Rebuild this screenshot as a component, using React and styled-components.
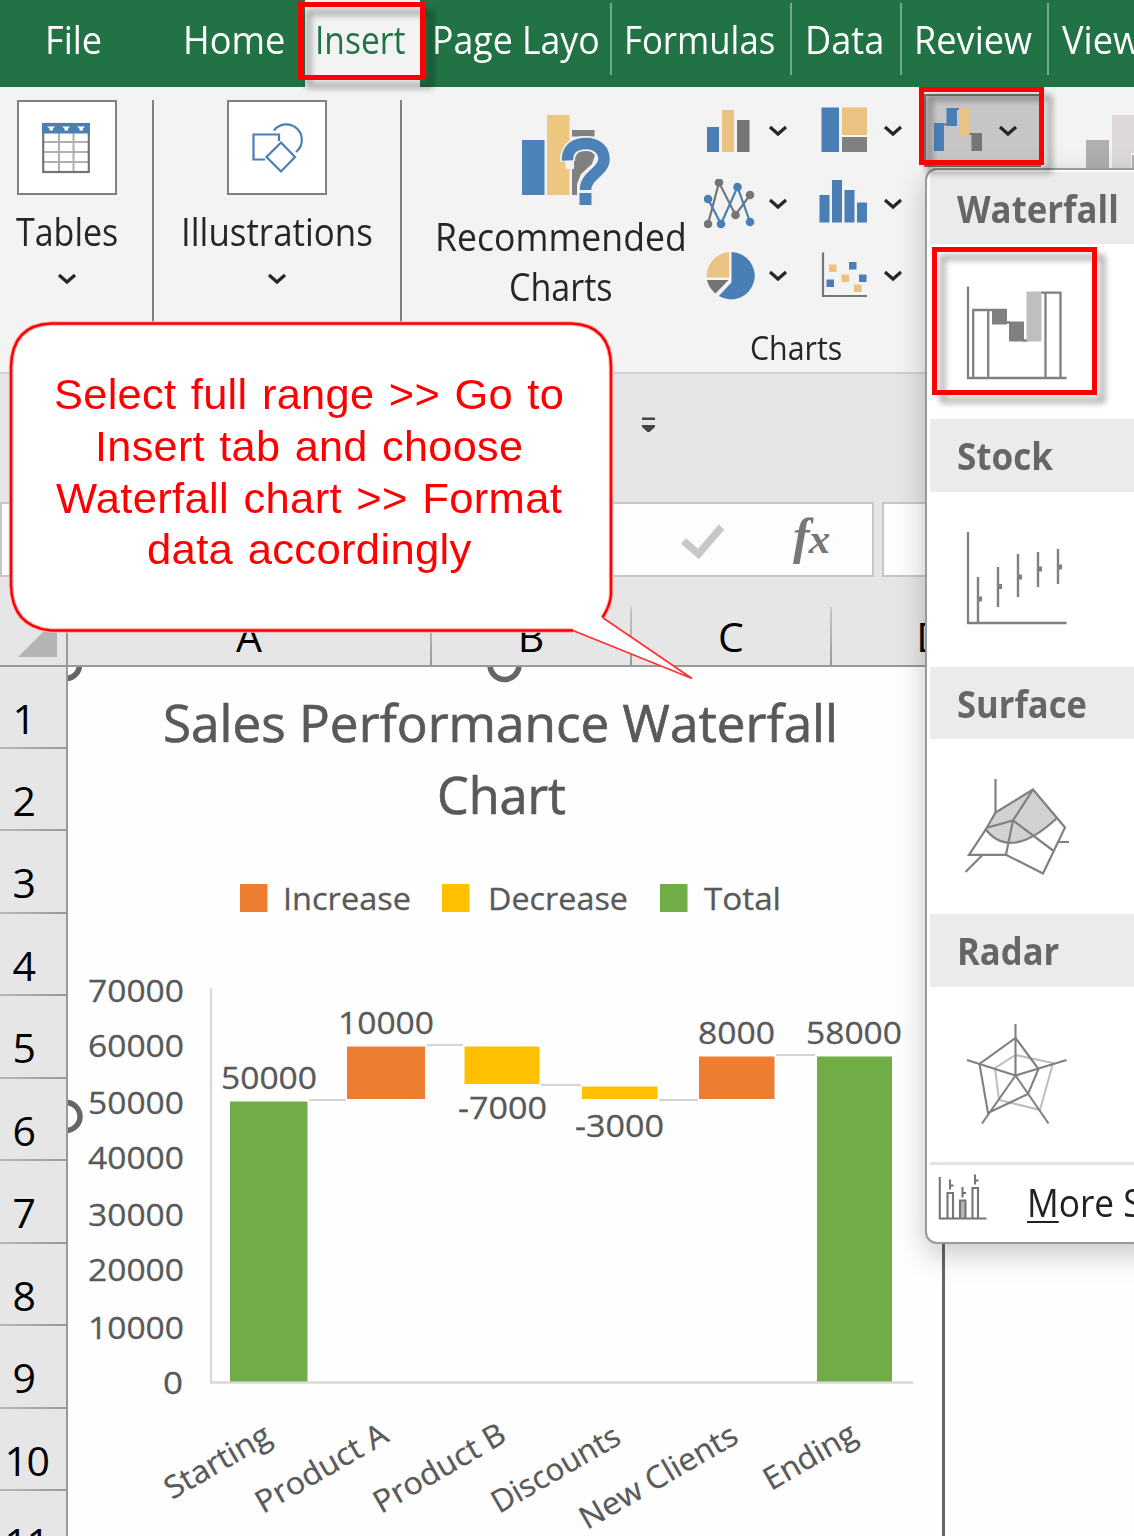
import React, { useLayoutEffect, useRef, useState } from "react";
import styled, { createGlobalStyle } from "styled-components";

const BLUE = "#4a7fb5";
const TAN = "#eac282";
const GRAY = "#757575";
const LINE = "#808080";

const TABS = [
  { name: "File", width: 163, pad: 45, text: 57 },
  { name: "Home", width: 142, pad: 20, text: 102 },
  { name: "Insert", width: 115, pad: 10, text: 90, active: true },
  { name: "Page Layo", width: 192, pad: 12, text: 168, divider: true },
  { name: "Formulas", width: 180, pad: 12, text: 151, divider: true },
  { name: "Data", width: 110, pad: 13, text: 79, divider: true },
  { name: "Review", width: 147, pad: 12, text: 118, divider: true },
  { name: "View", width: 90, pad: 13, text: 79 },
];

const COLUMNS = [
  { name: "A", width: 364 },
  { name: "B", width: 200 },
  { name: "C", width: 200 },
  { name: "D", width: 200 },
];

const ROWS = [1, 2, 3, 4, 5, 6, 7, 8, 9, 10, 11];

const NOTE = [
  ["Select full range >> Go to", 510],
  ["Insert tab and choose", 428],
  ["Waterfall chart >> Format", 506],
  ["data accordingly", 325],
];

const LEGEND = [
  { name: "Increase", color: "#ed7d31", x: 240, tx: 283, w: 128 },
  { name: "Decrease", color: "#ffc000", x: 442, tx: 488, w: 140 },
  { name: "Total", color: "#70ad47", x: 660, tx: 704, w: 77 },
];

const AXIS = [
  ["70000", 1001.5],
  ["60000", 1056.5],
  ["50000", 1114],
  ["40000", 1169],
  ["30000", 1226],
  ["20000", 1281],
  ["10000", 1338.5],
  ["0", 1393.5],
];

const BARS = [
  { x: 230, y: 1101.5, w: 77.5, h: 280, color: "#70ad47", label: "50000", lx: 221, ly: 1089, lw: 96 },
  { x: 347, y: 1046.5, w: 78, h: 52.5, color: "#ed7d31", label: "10000", lx: 338, ly: 1034, lw: 96 },
  { x: 464.5, y: 1046.5, w: 75, h: 37.5, color: "#ffc000", label: "-7000", lx: 458, ly: 1119, lw: 89 },
  { x: 582, y: 1086.5, w: 75.5, h: 12.5, color: "#ffc000", label: "-3000", lx: 575, ly: 1136.5, lw: 89 },
  { x: 699, y: 1056.5, w: 75.5, h: 42.5, color: "#ed7d31", label: "8000", lx: 698, ly: 1044, lw: 77 },
  { x: 817, y: 1056.5, w: 75, h: 325, color: "#70ad47", label: "58000", lx: 806, ly: 1044, lw: 96 },
];

const CONNECTORS = [
  [309, 346, 1100],
  [427, 463, 1045],
  [541, 581, 1085],
  [659, 698, 1100],
  [776, 815, 1055],
];

const CATEGORIES = [
  ["Starting", 172, 1500, 117],
  ["Product A", 263, 1514, 147],
  ["Product B", 381, 1514, 147],
  ["Discounts", 499, 1514, 143],
  ["New Clients", 587, 1530, 177],
  ["Ending", 771, 1491, 102],
];

// squeezes or stretches a label to the given width
function FitText({ width, children }) {
  const ref = useRef(null);
  const [scale, setScale] = useState(1);

  useLayoutEffect(() => {
    setScale(width / ref.current.offsetWidth);
  }, [width]);

  return (
    <St.Fit style={{ width }}>
      <St.FitInner ref={ref} style={{ transform: `scaleX(${scale})` }}>
        {children}
      </St.FitInner>
    </St.Fit>
  );
}

function Icon({ box, children }) {
  const [, , w, h] = box;
  return (
    <svg width={w} height={h} viewBox={box.join(" ")} fill="none">
      {children}
    </svg>
  );
}

function Chevron() {
  return (
    <Icon box={[0, 0, 20, 12]}>
      <path d="M2 2 L10 9 L18 2" stroke="#262626" strokeWidth="3.2" />
    </Icon>
  );
}

function TableIcon() {
  return (
    <Icon box={[42, 121, 50, 52]}>
      <path
        d="M59 132V171M73.5 132V171M43 141H89M43 151H89M43 161H89"
        stroke="#b0b0b0"
        strokeWidth="2"
      />
      <rect x="43.2" y="123" width="45.6" height="48" stroke={GRAY} strokeWidth="2.2" />
      <rect x="42" y="122" width="48" height="10.5" fill={BLUE} />
      <path
        d="M47 125.5H55L53 127.5V129.5H49.5V127.5ZM62 125.5H70L68 127.5V129.5H64.5V127.5ZM77 125.5H85L83 127.5V129.5H79.5V127.5Z"
        fill="#fff"
      />
    </Icon>
  );
}

function ShapesIcon() {
  return (
    <Icon box={[250, 121, 54, 52]}>
      <g stroke={BLUE} strokeWidth="2.2">
        <path d="M265 158.5H253.5V133.5H279V140" />
        <path d="M274 129.5A15.5 15.5 0 1 1 296 151" />
        <path d="M281 141.5L295 156L281 170.5L266.5 156Z" />
      </g>
    </Icon>
  );
}

function RecommendedIcon() {
  return (
    <Icon box={[512, 112, 98, 96]}>
      <rect x="522" y="140" width="22.5" height="55" fill="#4d82b8" />
      <rect x="547" y="115" width="22.5" height="80" fill="#edc77f" />
      <rect x="572" y="130" width="22.5" height="6.5" fill={LINE} />
      <path d="M572 162L579 151L588 149L595 155L592 164L581 174L577 184V195H572Z" fill={LINE} />
      <path
        d="M565.5 161.5H574M567.5 161.5C567 148 576 143.5 586 143.5C597 143.5 604 150 604 159C604 172 585.5 175 585.5 191"
        stroke="#f3f3f3"
        strokeWidth="15"
      />
      <rect x="577" y="189" width="17" height="19" fill="#f3f3f3" />
      <path
        d="M567.5 160.5C567 148 576 143.5 586 143.5C597 143.5 604 150 604 159C604 172 585.5 175 585.5 190"
        stroke="#4d82b8"
        strokeWidth="11.5"
      />
      <rect x="579.5" y="193" width="12" height="12" fill="#4d82b8" />
    </Icon>
  );
}

function ColumnIcon() {
  return (
    <Icon box={[704, 106, 52, 50]}>
      <rect x="707" y="127" width="12" height="25" fill={BLUE} />
      <rect x="722" y="110" width="12" height="42" fill={TAN} />
      <rect x="737" y="120" width="12.5" height="32" fill={GRAY} />
    </Icon>
  );
}

function HierarchyIcon() {
  return (
    <Icon box={[819, 106, 52, 50]}>
      <rect x="821.5" y="107.5" width="17.5" height="44.5" fill={BLUE} />
      <rect x="842" y="107.5" width="25" height="27.5" fill={TAN} />
      <rect x="842" y="137" width="25" height="15" fill={LINE} />
    </Icon>
  );
}

function LineIcon() {
  const grey = [[708, 223], [719, 181.5], [735.5, 214], [750, 194]];
  const blue = [[708, 198], [721, 223], [737.5, 186], [750, 221]];
  return (
    <Icon box={[704, 178, 52, 50]}>
      <polyline points={grey.join(" ")} stroke={GRAY} strokeWidth="2.2" />
      <polyline points={blue.join(" ")} stroke={BLUE} strokeWidth="2.2" />
      {grey.map(([x, y]) => (
        <circle key={x} cx={x} cy={y} r="4.3" fill={GRAY} />
      ))}
      {blue.map(([x, y]) => (
        <circle key={x} cx={x} cy={y} r="4.3" fill={BLUE} />
      ))}
    </Icon>
  );
}

function HistogramIcon() {
  return (
    <Icon box={[819, 179, 52, 50]}>
      <g fill={BLUE}>
        <rect x="819.5" y="195" width="10" height="27.5" />
        <rect x="832" y="180" width="10" height="42.5" />
        <rect x="844.5" y="190" width="10" height="32.5" />
        <rect x="857" y="202.5" width="10" height="20" />
      </g>
    </Icon>
  );
}

function PieIcon() {
  return (
    <Icon box={[704, 251, 52, 50]}>
      <path d="M729 277.5H706.8A24 24 0 0 1 729 252Z" fill={TAN} />
      <path d="M731.5 252A23.7 23.7 0 1 1 718.8 296L731.5 282.5Z" fill={BLUE} />
      <path d="M707 280H728.5L715.5 293.5A24 24 0 0 1 707 280Z" fill={GRAY} />
    </Icon>
  );
}

function ScatterIcon() {
  return (
    <Icon box={[819, 251, 52, 50]}>
      <path d="M823 252.5V296H867" stroke={GRAY} strokeWidth="2.2" />
      <path d="M829 264.5h7.5v7.5h-7.5zM841.5 274.5h7.5v7.5h-7.5zM854 284.5h7.5v7.5h-7.5z" fill={TAN} />
      <path d="M826.5 279.5h7.5v7.5h-7.5zM849 262h7.5v7.5h-7.5zM859 274.5h7.5v7.5h-7.5z" fill={BLUE} />
    </Icon>
  );
}

function WaterfallSmallIcon() {
  return (
    <Icon box={[932, 105, 52, 50]}>
      <path d="M944 123.5H948M957 108H960M968 133H972" stroke={GRAY} strokeWidth="2.2" />
      <rect x="934" y="122" width="10" height="28" fill={BLUE} />
      <rect x="946.5" y="107" width="10.5" height="18" fill={BLUE} />
      <rect x="959" y="107" width="10.5" height="28" fill={TAN} />
      <rect x="971.5" y="132" width="10.5" height="18" fill={GRAY} />
    </Icon>
  );
}

function WaterfallIcon() {
  return (
    <Icon box={[930, 244.5, 204, 175]}>
      <g stroke={LINE} strokeWidth="2.3">
        <path d="M968 287V378.5H1066.5" />
        <path d="M973.2 378V310.5H1006M988.2 310.5V378" />
        <path d="M1006 323H1010M1023 341H1028" />
        <path d="M1041 293.2H1060.5V378M1045.5 293.2V378" />
      </g>
      <rect x="992" y="309.5" width="15" height="15.5" fill={LINE} />
      <rect x="1009" y="322" width="15" height="20" fill={LINE} />
      <rect x="1026.5" y="292" width="15" height="50" fill="#bfbfbf" />
    </Icon>
  );
}

function StockIcon() {
  const sticks = [
    [978, 577, 622, 599],
    [998, 567, 607, 586.5],
    [1018, 554, 597, 577],
    [1038, 552, 587, 569],
    [1058, 549, 584, 567],
  ];
  return (
    <Icon box={[930, 492, 204, 175]}>
      <path d="M968 532V623H1066.5" stroke={LINE} strokeWidth="2.3" />
      {sticks.map(([x, top, bottom, tick]) => (
        <g key={x}>
          <path d={`M${x} ${top}V${bottom}`} stroke={LINE} strokeWidth="2.4" />
          <rect x={x} y={tick - 2.5} width="4" height="5" fill={LINE} />
        </g>
      ))}
    </Icon>
  );
}

function SurfaceIcon() {
  return (
    <Icon box={[930, 739.5, 204, 175]}>
      <path d="M1033 790L995.5 813L986 831Q1012 860 1056.5 819Z" fill="#d2d2d2" />
      <g stroke={LINE} strokeWidth="2.2">
        <path d="M995.5 779.5V813" />
        <path d="M1033 790L995.5 813L987 828L969 855.3H1006L1043 874L1065 828Z" />
        <path d="M1033 790L1013 821L1006 855M986 828.5L1013 821L1053 851" />
        <path d="M985 829Q1010 862 1056.5 819" />
        <path d="M982 856L965.5 872.5M1057 842.5H1069" />
      </g>
    </Icon>
  );
}

function RadarIcon() {
  return (
    <Icon box={[930, 987, 204, 175]}>
      <path d="M1015.5 1055L1053 1063L1040 1110L999 1100L995 1068Z" stroke="#bdbdbd" strokeWidth="2" />
      <g stroke={LINE} strokeWidth="2.1">
        <path d="M1015.5 1038L1038.5 1069L1028 1094L988 1113L979.5 1064Z" />
        <path d="M1015.5 1075.5V1024M1015.5 1075.5L1066.5 1060M1015.5 1075.5L1048.5 1123.5M1015.5 1075.5L982 1123.5M1015.5 1075.5L967 1060" />
      </g>
    </Icon>
  );
}

function MoreIcon() {
  return (
    <Icon box={[938.5, 1172.5, 50, 50]}>
      <rect x="960.5" y="1200" width="5.5" height="18" fill="#b5b5b5" />
      <g stroke={GRAY} strokeWidth="2.1">
        <path d="M940.3 1176.5V1218H987" />
        <path d="M948 1218V1192.5H953.5V1218M960.5 1218V1200H966V1218M973 1218V1187.5H978.5V1218" />
        <path d="M950.5 1179V1189M950.5 1185H954M963 1186.5V1197M963 1192.5H966.5M975.5 1174V1184M975.5 1180H979" />
      </g>
    </Icon>
  );
}

function GhostIcon() {
  return (
    <Icon box={[1086, 115, 48, 55]}>
      <rect x="1086" y="140" width="23" height="30" fill="#b1aeb1" />
      <rect x="1112" y="115" width="22" height="55" fill="#dcd8db" />
      <rect x="1131" y="153" width="3" height="17" fill="#f3f3f3" />
      <rect x="1132" y="155" width="2" height="15" fill="#b1aeb1" />
    </Icon>
  );
}

const CHART_BUTTONS = [
  ColumnIcon,
  HierarchyIcon,
  LineIcon,
  HistogramIcon,
  PieIcon,
  ScatterIcon,
];

const MENU = [
  { name: "Waterfall", text: 162, Drawing: WaterfallIcon },
  { name: "Stock", text: 96, Drawing: StockIcon },
  { name: "Surface", text: 130, Drawing: SurfaceIcon },
  { name: "Radar", text: 102, Drawing: RadarIcon },
];

function Chart() {
  return (
    <St.ChartSvg viewBox="68 667 1066 869">
      <path d="M943.5 667V1536" stroke="#666" strokeWidth="3" />
      <g fill="none" stroke="#666" strokeWidth="5.5">
        <circle cx="66" cy="665" r="13.5" />
        <circle cx="504.5" cy="665" r="14.5" />
        <circle cx="66" cy="1116.5" r="14" />
      </g>

      <St.Title x="163" y="742" textLength="675">
        Sales Performance Waterfall
      </St.Title>
      <St.Title x="437" y="814" textLength="129">
        Chart
      </St.Title>

      {LEGEND.map((item) => (
        <g key={item.name}>
          <rect x={item.x} y="884" width="27.5" height="28" fill={item.color} />
          <St.ChartText x={item.tx} y="909.5" textLength={item.w}>
            {item.name}
          </St.ChartText>
        </g>
      ))}

      {AXIS.map(([label, y]) => (
        <St.ChartText
          key={label}
          x={label === "0" ? 163 : 88}
          y={y}
          textLength={label === "0" ? 20 : 96}
        >
          {label}
        </St.ChartText>
      ))}

      <path d="M211 988V1382.5H913" fill="none" stroke="#d9d9d9" strokeWidth="2.3" />
      {CONNECTORS.map(([from, to, y]) => (
        <path key={from} d={`M${from} ${y}H${to}`} stroke="#d4d4d4" strokeWidth="2.2" />
      ))}
      {BARS.map((bar) => (
        <g key={bar.x}>
          <rect x={bar.x} y={bar.y} width={bar.w} height={bar.h} fill={bar.color} />
          <St.ChartText x={bar.lx} y={bar.ly} textLength={bar.lw}>
            {bar.label}
          </St.ChartText>
        </g>
      ))}
      {CATEGORIES.map(([name, x, y, w]) => (
        <St.ChartText
          key={name}
          x={x}
          y={y}
          textLength={w}
          transform={`rotate(-30 ${x} ${y})`}
        >
          {name}
        </St.ChartText>
      ))}
    </St.ChartSvg>
  );
}

function Ribbon() {
  return (
    <St.Ribbon>
      <St.Group $width={154} $pad={19}>
        <St.IconBox>
          <TableIcon />
        </St.IconBox>
        <St.GroupLabel>
          <FitText width={102}>Tables</FitText>
        </St.GroupLabel>
        <Chevron />
      </St.Group>
      <St.Group $width={248} $pad={0}>
        <St.IconBox>
          <ShapesIcon />
        </St.IconBox>
        <St.GroupLabel>
          <FitText width={192}>Illustrations</FitText>
        </St.GroupLabel>
        <Chevron />
      </St.Group>
      <St.Recommended>
        <RecommendedIcon />
        <St.RecommendedLabel>
          <FitText width={252}>Recommended</FitText>
          <FitText width={104}>Charts</FitText>
        </St.RecommendedLabel>
      </St.Recommended>
      <St.Charts>
        <St.ChartGrid>
          {CHART_BUTTONS.map((Drawing, i) => (
            <St.ChartButton key={i}>
              <Drawing />
              <Chevron />
            </St.ChartButton>
          ))}
        </St.ChartGrid>
        <St.ChartsLabel>
          <FitText width={92}>Charts</FitText>
        </St.ChartsLabel>
      </St.Charts>
      <St.Pressed>
        <WaterfallSmallIcon />
        <Chevron />
      </St.Pressed>
      <St.Ghost>
        <GhostIcon />
      </St.Ghost>
    </St.Ribbon>
  );
}

function Menu() {
  return (
    <St.Menu>
      {MENU.map(({ name, text, Drawing }) => (
        <St.MenuSection key={name}>
          <St.MenuHeading>
            <FitText width={text}>{name}</FitText>
          </St.MenuHeading>
          <Drawing />
        </St.MenuSection>
      ))}
      <St.MenuMore>
        <MoreIcon />
        <St.MoreLabel>
          <FitText width={116}>
            <u>M</u>ore S
          </FitText>
        </St.MoreLabel>
      </St.MenuMore>
    </St.Menu>
  );
}

function Callout() {
  return (
    <St.Callout>
      <St.CalloutShape width="700" height="370" viewBox="0 315 700 370">
        <path
          d="M51 323.5H571Q611 325 611 367V595Q610 606 602.5 617.5L692 678.5L573 630.5H51Q12 627 11 585V367Q12 325 51 323.5Z"
          fill="#fff"
        />
        <path
          d="M573 630.5H51Q12 627 11 585V367Q12 325 51 323.5H571Q611 325 611 367V595Q610 606 602.5 617.5"
          fill="none"
          stroke="#ffb0b0"
          strokeWidth="4.5"
        />
        <path
          d="M573 630.5H51Q12 627 11 585V367Q12 325 51 323.5H571Q611 325 611 367V595Q610 606 602.5 617.5"
          fill="none"
          stroke="#f00"
          strokeWidth="2.5"
        />
        <path
          d="M602.5 617.5L692 678.5L573 630.5"
          fill="none"
          stroke="#ff3030"
          strokeWidth="1.7"
        />
      </St.CalloutShape>
      <St.CalloutText>
        {NOTE.map(([line, width]) => (
          <FitText key={line} width={width}>
            {line}
          </FitText>
        ))}
      </St.CalloutText>
    </St.Callout>
  );
}

function App() {
  return (
    <St.Window>
      <GlobalStyle />
      <St.Tabs>
        {TABS.map((tab) => (
          <St.Tab
            key={tab.name}
            $width={tab.width}
            $pad={tab.pad}
            $active={tab.active}
            $divider={tab.divider}
          >
            <FitText width={tab.text}>{tab.name}</FitText>
          </St.Tab>
        ))}
      </St.Tabs>
      <Ribbon />
      <St.QuickAccess>
        <Icon box={[641, 416, 16, 18]}>
          <path d="M642 417.5H655V420H642ZM642 425H655V427L649.5 432H647.5L642 427Z" fill="#444" />
        </Icon>
      </St.QuickAccess>
      <St.FormulaBar>
        <St.FormulaTools>
          <Icon box={[680, 518, 46, 42]}>
            <path d="M683.5 540L698.5 553L721.5 526" stroke="#c8c8c8" strokeWidth="7.5" />
          </Icon>
          <St.Fx>
            f<small>x</small>
          </St.Fx>
        </St.FormulaTools>
        <St.FormulaInput />
      </St.FormulaBar>
      <St.ColumnHeads>
        <St.Corner>
          <Icon box={[17, 618, 41, 40]}>
            <path d="M18 657H57V618Z" fill="#b4b4b4" />
          </Icon>
        </St.Corner>
        {COLUMNS.map((col) => (
          <St.ColumnHead key={col.name} $width={col.width}>
            {col.name}
          </St.ColumnHead>
        ))}
      </St.ColumnHeads>
      <St.Sheet>
        <St.RowHeads>
          {ROWS.map((n) => (
            <St.RowHead key={n} $wide={n > 9}>
              {n}
            </St.RowHead>
          ))}
        </St.RowHeads>
        <Chart />
      </St.Sheet>
      <Menu />
      <Callout />
      <St.Marker $x={298} $y={2} $w={127} $h={78} />
      <St.Marker $x={919} $y={87} $w={125} $h={78} />
      <St.Marker $x={932} $y={247} $w={165} $h={148} />
    </St.Window>
  );
}

export default App;

const GlobalStyle = createGlobalStyle`
  body {
    margin: 0;
  }

  svg {
    display: block;
    flex: none;
  }
`;

const St = {
  Window: styled.div`
    position: relative;
    width: 1134px;
    height: 1536px;
    overflow: hidden;
    background-color: #e6e6e6;
    color: #262626;
    font-family: "Open Sans", "Noto Sans", sans-serif;
    font-size: 38px;
    box-sizing: border-box;

    * {
      box-sizing: border-box;
    }
  `,
  Fit: styled.span`
    display: block;
    flex: none;
    white-space: nowrap;
  `,
  FitInner: styled.span`
    display: inline-block;
    vertical-align: top;
    transform-origin: left;
  `,

  Tabs: styled.nav`
    display: flex;
    height: 87px;
    background-color: #217346;
  `,
  Tab: styled.div`
    flex: none;
    width: ${(p) => p.$width}px;
    padding: 1px 0 0 ${(p) => p.$pad}px;
    line-height: 76px;
    color: ${(p) => (p.$active ? "#217346" : "#fff")};
    background: ${(p) =>
      p.$active
        ? "#f3f3f3"
        : p.$divider
          ? "linear-gradient(#6fae87, #6fae87) right 3px / 2px 72px no-repeat"
          : "none"};
  `,

  Ribbon: styled.section`
    display: flex;
    height: 287px;
    background-color: #f3f3f3;
    border-bottom: 2px solid #d0d0d0;
  `,
  Group: styled.div`
    display: flex;
    flex-direction: column;
    align-items: center;
    flex: none;
    width: ${(p) => p.$width}px;
    height: 260px;
    margin-top: 13px;
    padding-right: ${(p) => p.$pad}px;
    border-right: 2px solid #808080;
  `,
  IconBox: styled.div`
    display: flex;
    align-items: center;
    justify-content: center;
    width: 100px;
    height: 95px;
    background-color: #fff;
    border: 2px solid #808080;
  `,
  GroupLabel: styled.div`
    height: 78px;
    line-height: 73px;
  `,
  Recommended: styled.div`
    display: flex;
    flex-direction: column;
    align-items: center;
    flex: none;
    width: 296px;
    margin: 25px 0 0 12px;
    padding-right: 2px;
  `,
  RecommendedLabel: styled.div`
    display: flex;
    flex-direction: column;
    align-items: center;
    line-height: 50px;
    margin-top: 3px;
  `,
  Charts: styled.div`
    flex: none;
    width: 214px;
    padding-top: 8px;
    margin-left: -6px;
  `,
  ChartGrid: styled.div`
    display: grid;
    grid-template-columns: 115px 99px;
    grid-auto-rows: 72.5px;
  `,
  ChartButton: styled.div`
    display: flex;
    align-items: center;
    gap: 12px;
  `,
  ChartsLabel: styled.div`
    padding: 10px 0 0 46px;
    font-size: 33px;
    line-height: 50px;
  `,
  Pressed: styled.div`
    display: flex;
    align-items: center;
    gap: 14px;
    flex: none;
    width: 117px;
    height: 73px;
    margin: 7px 0 0 6px;
    padding-left: 6px;
    background-color: #c6c6c6;
    border: 2px solid #777;
  `,
  Ghost: styled.div`
    padding: 28px 0 0 45px;
  `,

  QuickAccess: styled.div`
    height: 128px;
    padding: 42px 0 0 641px;
  `,
  FormulaBar: styled.div`
    display: flex;
    gap: 8px;
    height: 75px;
  `,
  FormulaTools: styled.div`
    display: flex;
    align-items: center;
    gap: 67px;
    width: 874px;
    padding-left: 678px;
    background-color: #fdfdfd;
    border: 2px solid #c6c6c6;
  `,
  Fx: styled.span`
    padding-bottom: 5px;
    color: #777;
    font-family: "Liberation Serif", serif;
    font-size: 50px;
    font-style: italic;
    font-weight: bold;
    line-height: 60px;
    white-space: nowrap;

    small {
      margin-left: -1px;
      font-size: 43px;
    }
  `,
  FormulaInput: styled.div`
    flex: 1;
    background-color: #fdfdfd;
    border: 2px solid #c6c6c6;
    border-right: 0;
  `,

  ColumnHeads: styled.div`
    display: flex;
    height: 90px;
    border-bottom: 2px solid #999;
  `,
  Corner: styled.div`
    flex: none;
    width: 68px;
    padding: 41px 0 0 17px;
    border-right: 2px solid #999;
  `,
  ColumnHead: styled.div`
    flex: none;
    width: ${(p) => p.$width}px;
    padding: 30px 2px 0 0;
    color: #000;
    font-size: 41px;
    line-height: 59px;
    text-align: center;
    background: linear-gradient(#c8c8c8, #999) right 30px / 2px 58px no-repeat;
  `,
  Sheet: styled.div`
    display: flex;
    height: 869px;
    background-color: #fefefe;
  `,
  RowHeads: styled.div`
    flex: none;
    width: 68px;
    overflow: hidden;
    background-color: #e6e6e6;
    border-right: 2px solid #999;
  `,
  RowHead: styled.div`
    height: 82.45px;
    padding: 15px ${(p) => (p.$wide ? 13 : 19)}px 0 0;
    color: #000;
    font-size: 41px;
    letter-spacing: -1.5px;
    line-height: 72px;
    text-align: center;
    background: linear-gradient(90deg, #b8b8b8, #999) left bottom / 100% 2px no-repeat;

    &:first-child {
      height: 82px;
    }
  `,

  ChartSvg: styled.svg`
    width: 1066px;
    height: 869px;
  `,
  Title: styled.text.attrs({ lengthAdjust: "spacingAndGlyphs" })`
    fill: #595959;
    stroke: #595959;
    stroke-width: 0.7px;
    font-size: 52px;
  `,
  ChartText: styled.text.attrs({ lengthAdjust: "spacingAndGlyphs" })`
    fill: #595959;
    stroke: #595959;
    stroke-width: 0.3px;
    font-size: 31px;
  `,

  Menu: styled.div`
    position: absolute;
    top: 168px;
    left: 925px;
    width: 240px;
    height: 1076px;
    padding: 2px 0 0 3px;
    background-color: #fff;
    border: 2px solid #999;
    border-radius: 12px;
    box-shadow: 0 10px 30px rgba(0, 0, 0, 0.22);
  `,
  MenuSection: styled.div`
    height: 247.4px;
    overflow: hidden;
  `,
  MenuHeading: styled.div`
    height: 72.4px;
    padding-left: 27px;
    background-color: #ebebeb;
    color: #666;
    font-weight: bold;
    line-height: 72px;
  `,
  MenuMore: styled.div`
    display: flex;
    gap: 39px;
    padding: 8px 0 0 8px;
    border-top: 3px solid #e3e3e8;
  `,
  MoreLabel: styled.div`
    line-height: 59px;
    color: #222;

    u {
      text-decoration-thickness: 2px;
      text-underline-offset: 4px;
    }
  `,

  Callout: styled.div`
    position: absolute;
    top: 315px;
    left: 0;
    width: 700px;
    height: 370px;
  `,
  CalloutShape: styled.svg`
    position: absolute;
    top: 0;
    left: 0;
  `,
  CalloutText: styled.div`
    position: relative;
    display: flex;
    flex-direction: column;
    align-items: center;
    width: 618px;
    padding-top: 54px;
    color: #f00;
    font-family: "Liberation Sans", Arial, sans-serif;
    font-size: 42px;
    letter-spacing: 0.3px;
    word-spacing: 2px;
    line-height: 51.8px;
  `,
  Marker: styled.div`
    position: absolute;
    left: ${(p) => p.$x}px;
    top: ${(p) => p.$y}px;
    width: ${(p) => p.$w}px;
    height: ${(p) => p.$h}px;
    border: 5px solid #f00;
    filter: drop-shadow(8px 8px 3px rgba(0, 0, 0, 0.35));
  `,
};
